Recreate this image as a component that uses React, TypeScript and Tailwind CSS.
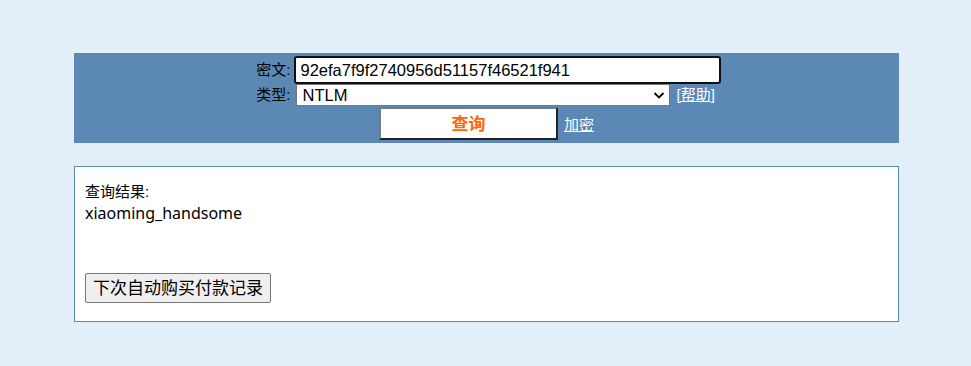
import React from 'react';

const font = { fontFamily: '"Liberation Sans", "Noto Sans CJK SC", sans-serif' };
const wide = { fontFamily: '"Noto Sans", "Noto Sans CJK SC", sans-serif' };

export default function App() {
  return (
    <div className="min-h-[366px] bg-[#e2eef8] pt-[53px]" style={font}>
      {/* Query panel */}
      <div className="ml-[74px] w-[825px] h-[90px] bg-[#5b88b4] pt-[3px] flex flex-col items-center text-[15px] text-black">
        <div className="flex items-center h-[28px]">
          <span className="w-[41px] text-right pr-[3px] whitespace-nowrap">密文:</span>
          <div className="w-[427px] h-[28px] bg-white border-2 border-[#101010] rounded-[3px] flex items-center px-[5px] text-[16.5px]">
            92efa7f9f2740956d51157f46521f941
          </div>
        </div>
        <div className="flex items-center h-[22px]">
          <span className="w-[43px] text-right pr-[5px] whitespace-nowrap">类型:</span>
          <div className="w-[374px] h-[22px] bg-white border border-[#767676] flex items-center justify-between pl-[6px] pr-[3px] text-[16.5px]">
            <span>NTLM</span>
            <svg width="14" height="14" viewBox="0 0 14 14" fill="none">
              <path d="M2.5 5l4.5 4.5L11.5 5" stroke="#000" strokeWidth="1.8" />
            </svg>
          </div>
          <a className="ml-[7px] text-white underline text-[15px] w-[44px] whitespace-nowrap">[帮助]</a>
        </div>
        <div className="flex items-center h-[34px]">
          <button className="w-[179px] h-[33px] pt-[3px] bg-white border-2 border-t-[#7a7a7a] border-l-[#7a7a7a] border-b-[#222] border-r-[#222] text-[#ff6600] font-bold text-[17px] leading-none">
            查询
          </button>
          <a className="ml-[6px] text-white underline text-[15px] mt-[5px]">加密</a>
        </div>
      </div>

      {/* Result panel */}
      <div className="ml-[74px] w-[825px] mt-[23px] h-[156px] bg-white border border-[#5b88b4] px-[10px] pt-[15px]">
        <div className="text-[15px] leading-[19px] text-black">查询结果:</div>
        <div className="text-[16px] leading-[22px] text-black mt-[1px]" style={wide}>xiaoming_handsome</div>
        <button className="mt-[49px] h-[30px] px-[7px] bg-[#efefef] border border-[#767676] rounded-[2px] text-[17px] text-black leading-none" style={font}>
          下次自动购买付款记录
        </button>
      </div>
    </div>
  );
}
